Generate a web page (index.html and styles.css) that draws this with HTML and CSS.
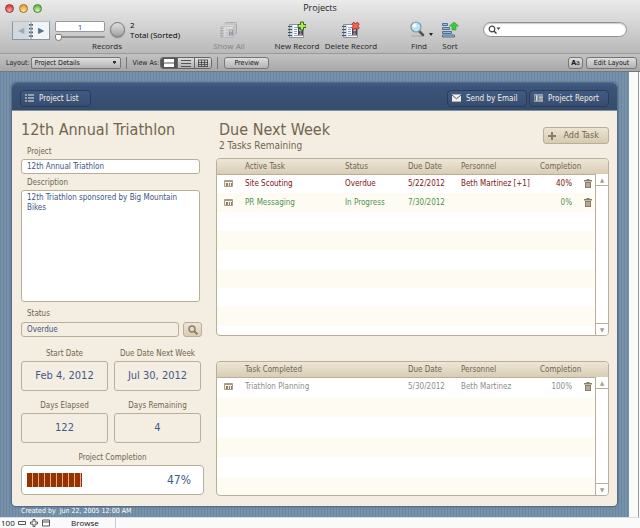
FILE: index.html
```
<!DOCTYPE html>
<html lang="en">
  <head>
    <meta charset="UTF-8" />
    <meta name="viewport" content="width=device-width, initial-scale=1.0" />
    <title>Projects</title>
    <link rel="stylesheet" href="styles.css">
  </head>
  <body>
    <svg width="0" height="0" class="sprite" aria-hidden="true">
      <symbol id="card" viewBox="0 0 16 14">
        <path d="M1.500.500h14v13h-14z" fill="#fbfbfb" stroke="#8a939c" />
        <path d="M2 1h3v12H2z" fill="#cdd6df" />
        <path d="M0 2.500h4M0 5.500h4M0 8.500h4M0 11.500h4" stroke="#3f5468" />
        <path d="M6 3.500h4M6 5.500h3M6 7.500h3M6 9.500h3M6 11.500h9" stroke="#8ba5c8" />
        <path d="M10 4h5v7h-5z" fill="#2d4a78" />
        <circle cx="12.500" cy="6" r="1.500" fill="#efb182" />
        <path d="M11 11q1.500-6 3 0z" fill="#ea7430" />
      </symbol>
      <symbol id="form" viewBox="0 0 9 7">
        <path d="M.5.500h8v6h-8z" fill="#f4efe4" stroke="#a79d88" />
        <path d="M1 1.500h7" stroke="#a79d88" />
        <path d="M2 3h2v3H2zM5 3h1v3H5zM7 3h1v3H7z" fill="#8b7d66" />
      </symbol>
      <symbol id="trash" viewBox="0 0 8 9">
        <path d="M2.500 0h3v1H8v1.500H0V1h2.500zM1 3h6v6H1z" fill="#8b7d66" />
        <path d="M3 4v4M5 4v4" stroke="#e9e2d4" stroke-width=".9" />
      </symbol>
    </svg>

    <header class="toolbar">
      <div class="titlebar">
        <div class="lights">
          <button class="light red" aria-label="Close"></button>
          <button class="light yellow" aria-label="Minimize"></button>
          <button class="light green" aria-label="Zoom"></button>
        </div>
        <h1>Projects</h1>
      </div>
      <div class="tools">
        <div class="records">
          <div class="records-row">
            <div class="book">
              <button class="page prev" aria-label="Previous record">&#9664;</button>
              <svg class="rings" viewBox="0 0 4 18" aria-hidden="true">
                <path d="M2 0v18" stroke="#71879a" stroke-width="1" />
                <path d="M0 3h4M0 7h4M0 11h4M0 15h4" stroke="#3f5466" stroke-width="1.800" stroke-dasharray="1.500 1" />
              </svg>
              <button class="page next" aria-label="Next record">&#9654;</button>
            </div>
            <div class="counter">
              <input class="record-number" type="text" value="1" aria-label="Record number">
              <input class="record-slider" type="range" min="1" max="2" value="1" aria-label="Record">
            </div>
            <button class="pie" aria-label="Found set"></button>
            <div class="total">2<br>Total (Sorted)</div>
          </div>
          <span class="tool-label">Records</span>
        </div>
        <button class="tool show-all" disabled>
          <svg class="tool-icon" viewBox="0 0 18 18">
            <path d="M5.500 1.500h11v11M3.500 3h11.500v11" fill="#eee" stroke="#777" />
            <use href="#card" y="5" width="14" height="12" />
          </svg>
          Show All
        </button>
        <button class="tool">
          <svg class="tool-icon" viewBox="0 0 18 18">
            <use href="#card" y="3" width="16" height="14" />
            <path d="M12.500 1h3v2.500H18v3h-2.500V9h-3V6.500H10v-3h2.500z" fill="#b4e65a" stroke="#35701a" />
          </svg>
          New Record
        </button>
        <button class="tool">
          <svg class="tool-icon" viewBox="0 0 18 18">
            <use href="#card" y="3" width="16" height="14" />
            <path d="M10.500 2l6 6M16.500 2l-6 6" stroke="#a8322a" stroke-width="3.600" />
            <path d="M11 2.500l5 5M16 2.500l-5 5" stroke="#f26a5c" stroke-width="2" />
          </svg>
          Delete Record
        </button>
        <button class="tool find">
          <svg class="tool-icon" viewBox="0 0 18 18">
            <path d="M1 15h12" stroke="#999" stroke-width="1.500" opacity=".5" />
            <path d="M9 10l4 4" stroke="#555" stroke-width="2.500" stroke-linecap="round" />
            <circle cx="6" cy="6" r="5" fill="#b4e6f8" stroke="#8796a0" stroke-width="1.200" />
            <circle cx="4.500" cy="4.500" r="2" fill="#fff" />
          </svg>
          Find
          <svg class="find-arrow" viewBox="0 0 4 3"><path d="M0 0h4L2 3z" fill="#222" /></svg>
        </button>
        <button class="tool sort">
          <svg class="tool-icon" viewBox="0 0 18 18">
            <path d="M1.500 2.500h5v2h-5zM1.500 6.500h7v2h-7zM1.500 10.500h9v2h-9zM1.500 14h12v2h-12z" fill="#9db8d6" stroke="#44678e" stroke-width=".9" />
            <path d="M13 1l4.500 4h-2.500v4h-4V5H8.500z" fill="#3ecb3a" stroke="#2a9a2b" stroke-width=".6" />
          </svg>
          Sort
        </button>
        <label class="search">
          <svg viewBox="0 0 13 9" aria-hidden="true">
            <circle cx="4" cy="4" r="2.800" fill="none" stroke="#444" stroke-width="1.200" />
            <path d="M6 6l2.500 2.500" stroke="#444" stroke-width="1.500" />
            <path d="M8.500 2.500h4l-2 2.500z" fill="#444" />
          </svg>
          <input type="search" aria-label="Search records">
        </label>
      </div>
    </header>

    <nav class="layoutbar">
      <label for="layout">Layout:</label>
      <select id="layout" class="layout-select">
        <option>Project Details</option>
      </select>
      <span class="divider"></span>
      <span>View As:</span>
      <div class="views">
        <button class="view active" aria-label="Form view">
          <svg viewBox="0 0 10 8"><path d="M0 0h10v3.500H0zM0 4.500h10V8H0z" fill="#fff" /></svg>
        </button>
        <button class="view" aria-label="List view">
          <svg viewBox="0 0 10 8"><path d="M0 1.500h10M0 4.500h10M0 7.500h10" stroke="#555" /></svg>
        </button>
        <button class="view" aria-label="Table view">
          <svg viewBox="0 0 10 8"><path d="M0 1h10M0 3.500h10M0 5.500h10M0 7.500h10M.5 1v7M3.500 1v7M6.500 1v7M9.500 1v7" stroke="#444" stroke-width=".8" /></svg>
        </button>
      </div>
      <span class="divider"></span>
      <button class="mac-button preview">Preview</button>
      <button class="mac-button format" aria-label="Formatting bar"><b>A</b>a</button>
      <button class="mac-button edit">Edit Layout</button>
    </nav>

    <main class="canvas">
      <div class="panel">
        <div class="panel-header">
          <button class="nav-button project-list">
            <svg class="nav-icon" viewBox="0 0 9 8"><path d="M0 1h2M0 4h2M0 7h2M3 1h6M3 4h6M3 7h6" stroke="#f3efe4" stroke-width="1.200" /></svg>
            Project List
          </button>
          <button class="nav-button email">
            <svg class="nav-icon" viewBox="0 0 10 8"><path d="M0 0h10v8H0z" fill="#f3efe4" /><path d="M0 .8l5 4 5-4" fill="none" stroke="#3a4f72" /></svg>
            Send by Email
          </button>
          <button class="nav-button report">
            <svg class="nav-icon" viewBox="0 0 10 8"><path d="M0 .5h10M0 7.500h10M5 2h5M5 3.500h5M5 5h5M5 6.300h5M0 2h1M0 4h1M0 6h1" stroke="#e4e0d6" stroke-width=".9" /><path d="M2 1h2v6H2z" fill="#e4e0d6" /></svg>
            Project Report
          </button>
        </div>
        <div class="panel-body">
          <section class="details">
            <h2>12th Annual Triathlon</h2>
            <label class="field-label" for="project">Project</label>
            <input class="field" id="project" type="text" value="12th Annual Triathlon">
            <label class="field-label" for="description">Description</label>
            <textarea class="field description" id="description">12th Triathlon sponsored by Big Mountain Bikes</textarea>
            <label class="field-label" for="status">Status</label>
            <div class="status-row">
              <input class="field status" id="status" type="text" value="Overdue">
              <button class="lookup" aria-label="Look up status">
                <svg viewBox="0 0 10 10"><circle cx="4" cy="4" r="3" fill="none" stroke="#8b7d66" stroke-width="1.400" /><path d="M6 6l3.300 3.300" stroke="#8b7d66" stroke-width="2" /></svg>
              </button>
            </div>
            <dl class="stats">
              <div><dt>Start Date</dt><dd>Feb 4, 2012</dd></div>
              <div><dt>Due Date Next Week</dt><dd>Jul 30, 2012</dd></div>
              <div><dt>Days Elapsed</dt><dd>122</dd></div>
              <div><dt>Days Remaining</dt><dd>4</dd></div>
            </dl>
            <div class="completion-label">Project Completion</div>
            <div class="completion">
              <div class="track"><div class="bar" style="width: 47%"></div></div>
              <span>47%</span>
            </div>
          </section>

          <section class="tasks">
            <div class="tasks-head">
              <div>
                <h2>Due Next Week</h2>
                <p>2 Tasks Remaining</p>
              </div>
              <button class="add-task">
                <svg viewBox="0 0 8 8"><path d="M4 0v8M0 4h8" stroke="#8b7d66" stroke-width="2" /></svg>
                Add Task
              </button>
            </div>

            <div class="portal active-tasks">
              <table>
                <colgroup>
                  <col class="c-icon"><col><col class="c-status"><col class="c-due"><col class="c-person"><col class="c-done"><col class="c-trash">
                </colgroup>
                <thead>
                  <tr><th></th><th>Active Task</th><th>Status</th><th>Due Date</th><th>Personnel</th><th>Completion</th><th></th></tr>
                </thead>
                <tbody>
                  <tr class="overdue">
                    <td><button class="row-button" aria-label="Open task"><svg class="form-icon"><use href="#form" /></svg></button></td>
                    <td>Site Scouting</td><td>Overdue</td><td>5/22/2012</td><td>Beth Martinez [+1]</td><td class="percent">40%</td>
                    <td><button class="row-button" aria-label="Delete task"><svg class="trash-icon"><use href="#trash" /></svg></button></td>
                  </tr>
                  <tr class="progress">
                    <td><button class="row-button" aria-label="Open task"><svg class="form-icon"><use href="#form" /></svg></button></td>
                    <td>PR Messaging</td><td>In Progress</td><td>7/30/2012</td><td></td><td class="percent">0%</td>
                    <td><button class="row-button" aria-label="Delete task"><svg class="trash-icon"><use href="#trash" /></svg></button></td>
                  </tr>
                </tbody>
              </table>
              <div class="scrollbar">
                <button aria-label="Scroll up">&#9650;</button>
                <button aria-label="Scroll down">&#9660;</button>
              </div>
            </div>

            <div class="portal done-tasks">
              <table>
                <colgroup>
                  <col class="c-icon"><col><col class="c-status"><col class="c-due"><col class="c-person"><col class="c-done"><col class="c-trash">
                </colgroup>
                <thead>
                  <tr><th></th><th colspan="2">Task Completed</th><th>Due Date</th><th>Personnel</th><th>Completion</th><th></th></tr>
                </thead>
                <tbody>
                  <tr class="done">
                    <td><button class="row-button" aria-label="Open task"><svg class="form-icon"><use href="#form" /></svg></button></td>
                    <td colspan="2">Triathlon Planning</td><td>5/30/2012</td><td>Beth Martinez</td><td class="percent">100%</td>
                    <td><button class="row-button" aria-label="Delete task"><svg class="trash-icon"><use href="#trash" /></svg></button></td>
                  </tr>
                </tbody>
              </table>
              <div class="scrollbar">
                <button aria-label="Scroll up">&#9650;</button>
                <button aria-label="Scroll down">&#9660;</button>
              </div>
            </div>
          </section>
        </div>
      </div>
      <p class="created">Created by&nbsp; Jun 22, 2005 12:00 AM</p>
    </main>

    <footer class="statusbar">
      <span class="zoom-level">100</span>
      <button aria-label="Zoom out"><svg viewBox="0 0 8 8"><path d="M.5 2.500h7v3h-7z" fill="#fff" stroke="#555" /></svg></button>
      <button aria-label="Zoom in"><svg viewBox="0 0 8 8"><path d="M3 .5h2V3h2.500v2H5v2.500H3V5H.5V3H3z" fill="#fff" stroke="#555" /></svg></button>
      <button aria-label="Toggle toolbar"><svg viewBox="0 0 8 8"><path d="M.5 1h7v6h-7zM.5 3h7" fill="#fff" stroke="#555" /></svg></button>
      <span class="mode">Browse</span>
    </footer>
  </body>
</html>
```
FILE: styles.css
```
* {
  box-sizing: border-box;
}

body {
  display: flex;
  flex-direction: column;
  min-height: 100vh;
  margin: 0;
  background: #fafafa;
  color: #222;
  font: 8px/10px "Open Sans", "Noto Sans", sans-serif;
}

button,
input,
select,
textarea {
  margin: 0;
  padding: 0;
  border: 0;
  background: none;
  color: inherit;
  font: inherit;
}

h1,
h2,
p,
dl,
dd {
  margin: 0;
  font-weight: normal;
}

svg {
  display: block;
  flex: none;
}

.sprite {
  position: absolute;
}

/* window toolbar */
.toolbar {
  height: 54px;
  border-bottom: 1px solid #9a9a9a;
  background: linear-gradient(#eaeaea, #d2d2d2 50%, #b9b9b9);
}

.titlebar {
  display: grid;
  grid-template-columns: 1fr auto 1fr;
  align-items: center;
  height: 16px;
  padding: 0 5px;
}

.titlebar h1 {
  font-size: 9px;
}

.lights {
  display: flex;
  gap: 5px;
}

.light {
  width: 9px;
  height: 9px;
  border: 1px solid #8a3a34;
  border-radius: 50%;
  background: radial-gradient(circle at 50% 80%, #ffb3a8, #e0443e 70%);
}

.light.yellow {
  border-color: #a3702b;
  background: radial-gradient(circle at 50% 80%, #ffeaa0, #eda23a 70%);
}

.light.green {
  border-color: #4e8238;
  background: radial-gradient(circle at 50% 80%, #dcf9b4, #6fb94c 70%);
}

.tools {
  display: flex;
  padding: 5px 13px 0 12px;
}

.records {
  flex: none;
  width: 190px;
}

.records-row {
  display: flex;
  height: 20px;
}

.tool-label {
  display: block;
  text-align: center;
}

.book {
  display: flex;
  width: 38px;
  height: 19px;
  border: 1px solid #8497a6;
  border-top-color: #b2bfc9;
  background: #f2f5f7;
}

.page {
  flex: 1;
  color: #4f7190;
  font: 8px/16px "DejaVu Sans", sans-serif;
}

.page.prev {
  background: #d3d8dc;
  color: #98aaba;
}

.rings {
  width: 4px;
  height: 17px;
}

.counter {
  display: flex;
  flex-direction: column;
  width: 50px;
  margin-left: 5px;
}

.record-number {
  width: 100%;
  height: 11px;
  border: 1px solid #999;
  border-radius: 2px;
  background: #fff;
  color: #36506d;
  text-align: center;
}

.record-slider {
  width: 100%;
  height: 9px;
  appearance: none;
}

.record-slider::-webkit-slider-runnable-track {
  height: 2px;
  border-radius: 1px;
  background: #8e8e8e;
}

.record-slider::-webkit-slider-thumb {
  width: 7px;
  height: 7px;
  margin-top: -2px;
  border: 1px solid #777;
  border-radius: 2px 2px 4px 4px;
  background: #fff;
  appearance: none;
}

.pie {
  width: 15px;
  height: 15px;
  margin: 1px 0 0 5px;
  border: 1px solid #777;
  border-radius: 50%;
  background: linear-gradient(#ddd, #a6a6a6);
  box-shadow: 0 1px 1px #888;
}

.total {
  margin: -1px 0 0 5px;
  color: #000;
  white-space: nowrap;
}

.tool {
  position: relative;
  display: flex;
  flex: none;
  flex-direction: column;
  align-items: center;
  gap: 2px;
  width: 54px;
  white-space: nowrap;
}

.tool-icon {
  width: 18px;
  height: 18px;
}

.show-all {
  margin-right: 14px;
  opacity: 0.4;
}

.find {
  width: 22px;
  margin-left: 30px;
}

.find-arrow {
  position: absolute;
  top: 12px;
  right: -3px;
  width: 4px;
  height: 3px;
}

.sort {
  width: 22px;
  margin-left: 9px;
}

.search {
  display: flex;
  flex: 1;
  align-items: center;
  gap: 3px;
  height: 15px;
  margin: 1px 0 0 22px;
  padding: 0 4px;
  border: 1px solid #929292;
  border-radius: 8px;
  background: #fff;
  box-shadow: inset 0 1px 1px #ccc;
}

.search svg {
  width: 13px;
  height: 9px;
}

.search input {
  flex: 1;
  min-width: 0;
  outline: 0;
}

/* layout bar */
.layoutbar {
  display: flex;
  align-items: center;
  height: 18px;
  padding: 0 3px 0 6px;
  border-bottom: 1px solid #777;
  background: linear-gradient(#c2c2c2, #a8a8a8);
  font-family: "DejaVu Sans Condensed", "Noto Sans", sans-serif;
  font-size: 7px;
}

.layout-select {
  width: 90px;
  height: 12px;
  margin-left: 1px;
  padding: 0 3px;
  border: 1px solid #777;
  border-radius: 2px;
  background: conic-gradient(from -35deg at 50% 100%, #333 70deg, transparent 0) right 3px center / 5px 3px no-repeat,
    linear-gradient(#dedede, #b4b4b4);
  color: #111;
  appearance: none;
}

.divider {
  width: 1px;
  height: 12px;
  margin: 0 6px 0 5px;
  background: #777;
}

.views {
  display: flex;
  margin-left: 1px;
  border: 1px solid #666;
  border-radius: 3px;
  overflow: hidden;
}

.view {
  display: flex;
  align-items: center;
  justify-content: center;
  width: 16px;
  height: 10px;
  background: linear-gradient(#ddd, #b0b0b0);
}

.view + .view {
  width: 17px;
  border-left: 1px solid #666;
}

.view.active {
  background: #555;
}

.view svg {
  width: 10px;
  height: 8px;
}

.mac-button {
  height: 12px;
  border: 1px solid #777;
  border-radius: 3px;
  background: linear-gradient(#dedede, #b4b4b4);
  color: #111;
  line-height: 10px;
}

.preview {
  width: 45px;
}

.format {
  width: 15px;
  margin-left: auto;
}

.edit {
  width: 51px;
  margin-left: 3px;
}

/* layout canvas */
.canvas {
  flex: 1;
  margin-right: 11px;
  padding: 11px 12px 0;
  background: repeating-linear-gradient(90deg, #6a86a1 0 1px, #7891aa 1px 3px);
  box-shadow: 9px 0 #fafafa, 10px 0 #999;
  font: 8px/11px "DejaVu Sans Condensed", "Noto Sans", sans-serif;
}

.panel {
  border-radius: 4px;
  background: #f4ede1;
  box-shadow: 0 0 2px 1px #4d6279;
}

.panel-header {
  display: flex;
  align-items: center;
  gap: 2px;
  height: 28px;
  padding: 3px 8px 0;
  border-bottom: 1px solid #8590a0;
  border-radius: 4px 4px 0 0;
  background: linear-gradient(#415e8b, #3b5478 15%, #364c6c);
}

.nav-button {
  display: flex;
  align-items: center;
  gap: 5px;
  height: 17px;
  padding: 0 4px;
  border: 1px solid #2a3c57;
  border-radius: 4px;
  background: linear-gradient(#405a82, #374e71);
  color: #f3efe4;
  white-space: nowrap;
}

.project-list {
  width: 71px;
}

.email {
  width: 80px;
  margin-left: auto;
}

.report {
  width: 80px;
}

.nav-icon {
  width: 9px;
  height: 8px;
}

.panel-body {
  display: flex;
  gap: 12px;
  padding: 9px 8px 10px 9px;
  color: #70664f;
}

.details {
  flex: none;
  width: 183px;
}

h2 {
  font-size: 16px;
  line-height: 20px;
  white-space: nowrap;
}

.field-label {
  display: block;
  height: 16px;
  padding: 3px 6px 0;
}

.details h2 + .field-label {
  height: 19px;
  padding-top: 6px;
}

.field {
  display: block;
  width: 179px;
  height: 15px;
  padding: 0 5px;
  border: 1px solid #b8ae99;
  border-radius: 3px;
  background: #fff;
  color: #3d5485;
  line-height: 10px;
}

.description {
  height: 112px;
  padding: 2px 5px;
  resize: none;
}

.description + .field-label {
  height: 20px;
  padding-top: 6px;
}

.status-row {
  display: flex;
  gap: 4px;
}

.status {
  width: 158px;
  background: #f4ede1;
}

.lookup {
  display: flex;
  align-items: center;
  justify-content: center;
  width: 19px;
  height: 15px;
  border: 1px solid #b8ae99;
  border-radius: 3px;
  background: linear-gradient(#eee6d6, #d8cdb4);
}

.lookup svg {
  width: 10px;
  height: 10px;
}

.stats {
  display: grid;
  grid-template-columns: 87px 87px;
  gap: 6px;
  margin-top: 8px;
  text-align: center;
}

dt,
.completion-label {
  height: 16px;
  padding-top: 3px;
  white-space: nowrap;
}

dd {
  height: 30px;
  border: 1px solid #b8ae99;
  border-radius: 3px;
  color: #3f5a8a;
  font-size: 11px;
  line-height: 28px;
}

.completion-label {
  margin-top: 6px;
  text-align: center;
}

.completion {
  display: flex;
  align-items: center;
  justify-content: space-between;
  height: 30px;
  padding: 0 12px 0 5px;
  border: 1px solid #b8ae99;
  border-radius: 4px;
  background: #fff;
  color: #3f5a8a;
  font-size: 12px;
}

.track {
  width: 118px;
}

.bar {
  height: 14px;
  background: repeating-linear-gradient(90deg, #963200 0 5px, #d9b199 5px 6px);
}

/* task lists */
.tasks {
  flex: 1;
  min-width: 0;
}

.tasks-head {
  display: flex;
  align-items: flex-start;
  justify-content: space-between;
  height: 38px;
  padding-left: 3px;
}

.tasks-head p {
  font-size: 10px;
}

.add-task {
  display: flex;
  align-items: center;
  justify-content: space-between;
  width: 66px;
  height: 17px;
  margin-top: 7px;
  padding: 0 9px 0 4px;
  border: 1px solid #b8ae99;
  border-radius: 3px;
  background: linear-gradient(#ece4d2, #d6cbb0);
  font-size: 9px;
}

.add-task svg {
  width: 8px;
  height: 8px;
}

.portal {
  display: grid;
  grid-template-rows: 15px 1fr;
  grid-template-columns: 1fr 13px;
  border: 1px solid #b8ae99;
  border-radius: 4px;
  overflow: hidden;
}

.active-tasks {
  height: 178px;
  background: repeating-linear-gradient(#fff 0 19px, #fefbf3 19px 38px) 0 15px no-repeat;
}

.done-tasks {
  height: 135px;
  margin-top: 25px;
  background: repeating-linear-gradient(#fff 0 20px, #fefbf3 20px 40px) 0 15px no-repeat;
}

.portal table {
  grid-row: 1 / 3;
  grid-column: 1 / 3;
  align-self: start;
  width: 100%;
  border-collapse: collapse;
  table-layout: fixed;
}

.portal thead {
  background: linear-gradient(#eee7d7, #d8cdb4);
}

.portal th,
.portal td {
  padding: 0;
  font-weight: normal;
  text-align: left;
  white-space: nowrap;
}

.portal th {
  height: 15px;
  border-bottom: 1px solid #b8ae99;
}

.portal td {
  height: 19px;
}

.c-icon {
  width: 28px;
}

.c-status {
  width: 63px;
}

.c-due {
  width: 53px;
}

.c-person {
  width: 79px;
}

.c-done {
  width: 44px;
}

.c-trash {
  width: 24px;
}

.portal .percent {
  padding-right: 12px;
  text-align: right;
}

.overdue {
  color: #7d1412;
}

.progress {
  color: #4f9350;
}

.done {
  color: #8d8d8d;
}

.row-button {
  display: block;
}

.form-icon {
  width: 9px;
  height: 7px;
  margin-left: 7px;
}

.trash-icon {
  width: 8px;
  height: 9px;
}

.scrollbar {
  display: flex;
  grid-row: 2;
  grid-column: 2;
  flex-direction: column;
  justify-content: space-between;
  border-left: 1px solid #b8ae99;
  background: #fff;
}

.scrollbar button {
  height: 12px;
  border-bottom: 1px solid #b8ae99;
  color: #a79d88;
  font-size: 6px;
  line-height: 10px;
}

.scrollbar button:last-child {
  border-top: 1px solid #b8ae99;
  border-bottom: 0;
}

.created {
  padding-left: 9px;
  color: #fff;
  font-size: 7px;
  line-height: 11px;
}

/* window footer */
.statusbar {
  display: flex;
  align-items: center;
  gap: 4px;
  height: 11px;
  padding-left: 1px;
  border-top: 1px solid #ddd;
  color: #111;
}

.statusbar svg {
  width: 8px;
  height: 8px;
}

.zoom-level {
  width: 13px;
}

.mode {
  width: 62px;
  padding-left: 17px;
  border-right: 1px solid #ccc;
}
```
